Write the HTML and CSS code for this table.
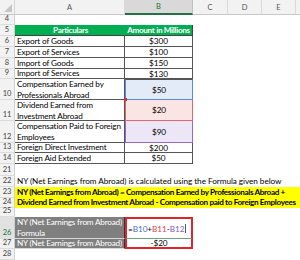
FILE: index.html
```html
<!DOCTYPE html>
<html>
<head>
<meta charset="utf-8">
<link rel="stylesheet" href="styles.css">
</head>
<body>
<div class="sheet">
  <div class="corner"><span class="tri"></span></div>
  <div class="ch">A</div><div class="ch sel">B</div><div class="ch">C</div><div class="ch">D</div><div class="ch">E</div><div class="ch last"></div>

  <div class="rh">4</div><div class="blank"></div>

  <div class="rh">5</div><div class="a hd">Particulars</div><div class="b hd">Amount in Millions</div><div class="rest"></div>

  <div class="rh">6</div><div class="a">Export of Goods</div><div class="b">$300</div><div class="rest"></div>
  <div class="rh">7</div><div class="a">Export of Services</div><div class="b">$100</div><div class="rest"></div>
  <div class="rh">8</div><div class="a">Import of Goods</div><div class="b">$150</div><div class="rest"></div>
  <div class="rh">9</div><div class="a">Import of Services</div><div class="b">$130</div><div class="rest"></div>
  <div class="rh">10</div><div class="a two">Compensation Earned by<br>Professionals Abroad</div><div class="b ref blue">$50</div><div class="rest"></div>
  <div class="rh">11</div><div class="a two">Dividend Earned from<br>Investment Abroad</div><div class="b ref red"><span class="handle"></span>$20</div><div class="rest"></div>
  <div class="rh">12</div><div class="a two">Compensation Paid to Foreign<br>Employees</div><div class="b ref purple">$90</div><div class="rest"></div>
  <div class="rh">13</div><div class="a">Foreign Direct Investment</div><div class="b">$200</div><div class="rest"></div>
  <div class="rh">14</div><div class="a">Foreign Aid Extended</div><div class="b">$50</div><div class="rest"></div>

  <div class="rh">21</div><div class="blank"></div>
  <div class="rh">22</div><div class="line">NY (Net Earnings from Abroad) is calculated using the Formula given below</div>
  <div class="rh">23</div><div class="line hl">NY (Net Earnings from Abroad) = Compensation Earned by Professionals Abroad +</div>
  <div class="rh">24</div><div class="line hl">Dividend Earned from Investment Abroad - Compensation paid to Foreign Employees</div>
  <div class="rh">25</div><div class="blank"></div>

  <div class="rh act">26</div><div class="a dark two">NY (Net Earnings from Abroad)<br>Formula</div><div class="b edit"><span class="fb">B10</span>+<span class="fr">B11</span>-<span class="fp">B12</span><span class="caret"></span></div><div class="rest"></div>
  <div class="rh">27</div><div class="a dark">NY (Net Earnings from Abroad)</div><div class="b res">-$20</div><div class="rest"></div>
  <div class="rh">28</div><div class="blank"></div>
</div>
</body>
</html>
```

FILE: styles.css
```css
html, body {
  margin: 0;
  padding: 0;
  background: #ffffff;
}
body {
  font-family: Lato, "Liberation Sans", sans-serif;
  font-size: 8.2px;
  letter-spacing: -0.05px;
  color: #000;
  width: 300px;
  height: 260px;
  overflow: hidden;
}
.sheet {
  display: grid;
  grid-template-columns: 15px 110px 68px 35px 34px 34px 4px;
  grid-template-rows: 15px 10px 11px 11px 11px 11px 10px 21px 21px 22px 10px 11px 12px 11px 11px 10px 9px 22px 10px 11px;
  width: 300px;
}
.corner {
  background: #f2f2f2;
  border-right: 1px solid #d4d4d4;
  border-bottom: 1px solid #c8c8c8;
  box-sizing: border-box;
  position: relative;
}
.tri {
  position: absolute;
  right: 2px;
  bottom: 2px;
  width: 0;
  height: 0;
  border-left: 8px solid transparent;
  border-bottom: 8px solid #c6c6c6;
}
.ch {
  background: #f2f2f2;
  color: #555;
  font-size: 7.5px;
  display: flex;
  align-items: center;
  justify-content: center;
  border-right: 1px solid #d9d9d9;
  border-bottom: 1px solid #c8c8c8;
  box-sizing: border-box;
}
.ch.sel {
  background: #d9d9d9;
  color: #217346;
  border-bottom: 2px solid #217346;
  border-right-color: #c0c0c0;
}
.ch.last { border-right: none; }
.rh {
  background: #f2f2f2;
  color: #444;
  font-size: 7.5px;
  display: flex;
  align-items: flex-end;
  justify-content: center;
  border-right: 1px solid #cfcfcf;
  border-bottom: 1px solid #dcdcdc;
  box-sizing: border-box;
  line-height: 10px;
}
.rh.act {
  background: #e1e1e1;
  color: #217346;
}
.blank, .line {
  grid-column: 2 / -1;
}
.rest {
  grid-column: 4 / -1;
}
.a, .b {
  box-sizing: border-box;
  border-right: 1px solid #555;
  border-bottom: 1px solid #555;
  display: flex;
  align-items: flex-end;
  line-height: 10px;
  white-space: nowrap;
}
.a {
  padding-left: 2px;
  letter-spacing: -0.15px;
}
.b {
  justify-content: center;
  align-items: center;
}
.a.two {
  align-items: flex-start;
  line-height: 10.5px;
}
.hd {
  background: #00b050;
  color: #fff;
  font-weight: bold;
  letter-spacing: -0.35px;
  justify-content: center;
  align-items: center;
  border-right-color: #00b050;
  border-bottom-color: #444;
}
.b.hd { border-right-color: #444; }
.ref {
  position: relative;
}
.blue {
  background: #e3ebf9;
  border: 1px solid #5a8ae0;
  border-top: 1px solid #555;
}
.red {
  background: #fbe4e4;
  border: 1px solid #e06868;
  border-top: none;
}
.purple {
  background: #ece6f7;
  border: 1.5px solid #9068d8;
  border-top: none;
}
.handle {
  position: absolute;
  left: -2px;
  top: -2px;
  width: 3px;
  height: 3px;
  background: #d03030;
}
.line {
  padding-left: 2px;
  display: flex;
  align-items: flex-end;
  line-height: 11px;
  white-space: nowrap;
}
.hl {
  background: #ffff00;
  font-weight: bold;
  letter-spacing: -0.38px;
}
.dark {
  background: #7f7f7f;
  color: #fff;
  letter-spacing: -0.2px;
  border-right-color: #333;
  border-bottom-color: #d8d8d8;
}
.edit {
  border: 2px solid #e0242a;
  border-bottom: 1px solid #6aa57f;
  justify-content: flex-start;
  align-items: center;
  padding-left: 1px;
}
.edit::before { content: "="; }
.fb { color: #3b6fd6; }
.fr { color: #e0424a; }
.fp { color: #8060c8; }
.caret {
  display: inline-block;
  width: 1px;
  height: 9px;
  background: #555;
  margin-left: 1px;
}
.res {
  border: 2px solid #e0242a;
  border-top: none;
  justify-content: center;
  align-items: center;
}
```
